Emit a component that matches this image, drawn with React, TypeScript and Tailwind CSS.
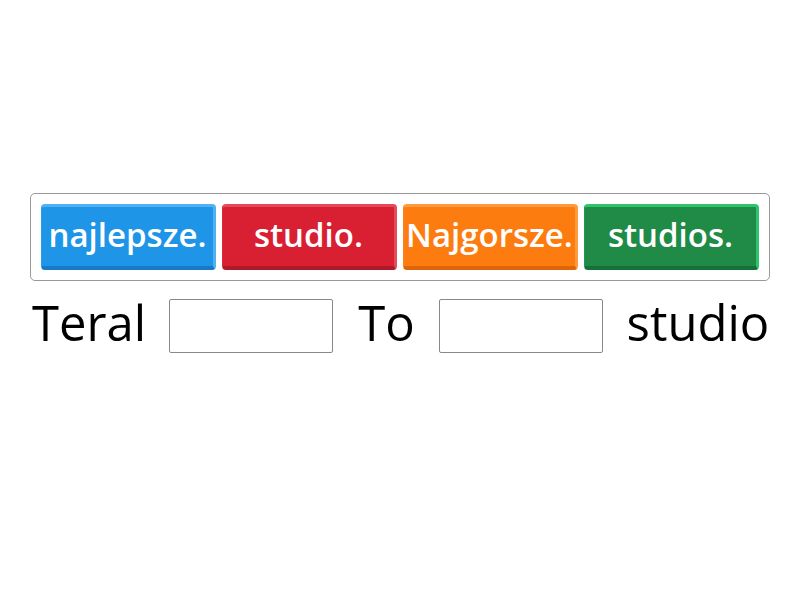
const tiles = [
  { text: "najlepsze.", cls: "bg-[#1f95e8] border-t-[#4fb1f2] border-r-[#4fb1f2] border-b-[#1779c8] border-l-[#2a9cec]" },
  { text: "studio.", cls: "bg-[#d91f32] border-t-[#e6495a] border-r-[#e6495a] border-b-[#b0192a] border-l-[#dc2a3c]" },
  { text: "Najgorsze.", cls: "bg-[#fd7c10] border-t-[#ff9a3e] border-r-[#ff9a3e] border-b-[#df6608] border-l-[#fe8420]" },
  { text: "studios.", cls: "bg-[#1f8b46] border-t-[#2ec46c] border-r-[#2ec46c] border-b-[#16703a] border-l-[#22964c]" },
]

export default function App() {
  return (
    <div className="w-[800px] h-[600px] bg-white pt-[193px] pl-[30px] font-['Open_Sans',sans-serif]">
      <div className="w-[740px] h-[88px] border border-[#999] rounded-[5px] flex items-center gap-[6px] pl-[10px]">
        {tiles.map((t) => (
          <div
            key={t.text}
            className={`w-[175px] h-[66px] rounded-[4px] border-t-[3px] border-r-[3px] border-b-[4px] border-l-[1px] flex items-center justify-center pb-[3px] text-white font-semibold text-[33px] ${t.cls}`}
          >
            {t.text}
          </div>
        ))}
      </div>
      <div className="flex items-center h-[74px] mt-[8px] pl-[2px] text-[49px] text-black">
        <span className="leading-none pb-[8px]">Teral</span>
        <div className="w-[164px] h-[54px] border border-[#888] rounded-[2px] ml-[23px] mr-[25px]" />
        <span className="leading-none pb-[8px]">To</span>
        <div className="w-[164px] h-[54px] border border-[#888] rounded-[2px] ml-[24px] mr-[24px]" />
        <span className="leading-none pb-[8px]">studio</span>
      </div>
    </div>
  )
}
